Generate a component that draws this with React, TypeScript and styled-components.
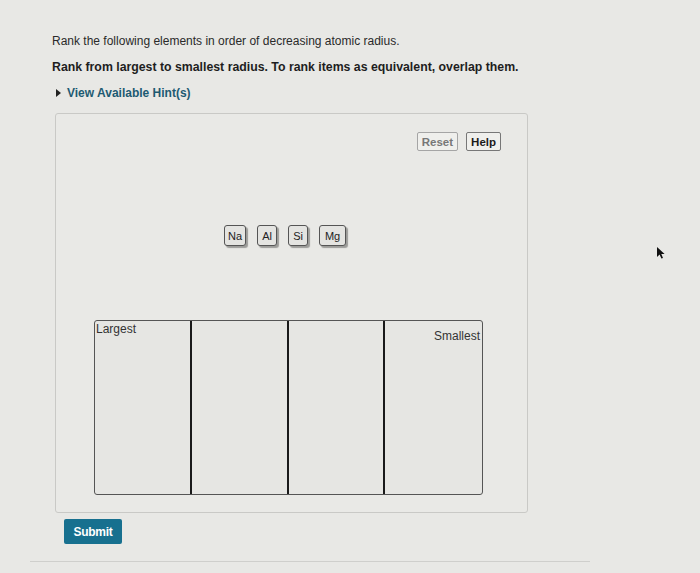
import React from "react";
import styled, { createGlobalStyle } from "styled-components";

const GlobalStyle = createGlobalStyle`
  html, body {
    margin: 0;
    padding: 0;
    background: #e8e8e5;
  }
  body {
    font-family: "Liberation Sans", Arial, sans-serif;
    color: #222;
  }
`;

const elements = ["Na", "Al", "Si", "Mg"];

const App = () => {
  return (
    <>
      <GlobalStyle />
      <Page>
        <Intro>Rank the following elements in order of decreasing atomic radius.</Intro>
        <Instruction>
          Rank from largest to smallest radius. To rank items as equivalent, overlap them.
        </Instruction>
        <HintToggle>
          <Caret />
          View Available Hint(s)
        </HintToggle>

        <Panel>
          <Toolbar>
            <ToolButton>Reset</ToolButton>
            <ToolButton $strong>Help</ToolButton>
          </Toolbar>

          <TileRow>
            {elements.map((el) => (
              <Tile key={el} $wide={el === "Mg"}>
                {el}
              </Tile>
            ))}
          </TileRow>

          <RankBox>
            <Slot>
              <SlotLabel>Largest</SlotLabel>
            </Slot>
            <Slot />
            <Slot />
            <Slot $end>
              <SlotLabel $right>Smallest</SlotLabel>
            </Slot>
          </RankBox>
        </Panel>

        <SubmitButton>Submit</SubmitButton>
        <Rule />
      </Page>
      <Cursor viewBox="0 0 10 14">
        <path d="M1 1 L1 11 L3.6 8.6 L5.4 12.6 L7 11.9 L5.3 8 L8.6 8 Z" fill="#111" />
      </Cursor>
    </>
  );
};

const Page = styled.div`
  padding: 34px 0 0 52px;
  width: 476px;
`;

const Intro = styled.p`
  margin: 0 0 12px;
  font-size: 12px;
  color: #2a2a2a;
`;

const Instruction = styled.p`
  margin: 0 0 12px;
  font-size: 12.3px;
  font-weight: 700;
  color: #1e1e1e;
`;

const HintToggle = styled.div`
  display: flex;
  align-items: center;
  gap: 6px;
  margin-left: 4px;
  font-size: 12px;
  font-weight: 700;
  color: #1d5a72;
`;

const Caret = styled.span`
  width: 0;
  height: 0;
  border-top: 4px solid transparent;
  border-bottom: 4px solid transparent;
  border-left: 5px solid #222;
`;

const Panel = styled.div`
  margin: 13px 0 0 3px;
  height: 400px;
  box-sizing: border-box;
  border: 1px solid #c9c9c6;
  border-radius: 3px;
  background: #e9e9e6;
  padding: 18px 26px 0 38px;
  display: flex;
  flex-direction: column;
`;

const Toolbar = styled.div`
  display: flex;
  justify-content: flex-end;
  gap: 8px;
`;

const ToolButton = styled.button<{ $strong?: boolean }>`
  height: 19px;
  padding: 0 4px;
  border: 1px solid ${(p) => (p.$strong ? "#777" : "#a5a5a5")};
  border-radius: 2px;
  background: #efefec;
  font-family: "Liberation Sans", Arial, sans-serif;
  font-size: 11.5px;
  font-weight: 700;
  color: ${(p) => (p.$strong ? "#1a1a1a" : "#777")};
`;

const TileRow = styled.div`
  display: flex;
  gap: 11px;
  margin: 74px 0 0 130px;
`;

const Tile = styled.div<{ $wide?: boolean }>`
  height: 21px;
  min-width: ${(p) => (p.$wide ? "27px" : "20px")};
  padding: 0 3px;
  box-sizing: border-box;
  display: flex;
  align-items: center;
  justify-content: center;
  border: 1px solid #555;
  border-radius: 3px;
  background: #e4e4e1;
  box-shadow: 2px 2px 1px #9c9c99;
  font-size: 11px;
  color: #222;
`;

const RankBox = styled.div`
  margin-top: 74px;
  height: 175px;
  width: 389px;
  box-sizing: border-box;
  border: 1.5px solid #555;
  border-radius: 3px;
  display: grid;
  grid-template-columns: repeat(4, 1fr);
  background: #e6e6e3;
`;

const Slot = styled.div<{ $end?: boolean }>`
  position: relative;
  border-right: ${(p) => (p.$end ? "none" : "2px solid #1a1a1a")};
`;

const SlotLabel = styled.span<{ $right?: boolean }>`
  position: absolute;
  top: 1px;
  ${(p) => (p.$right ? "right: 2px; top: 8px;" : "left: 1px;")}
  font-size: 12px;
  color: #333;
`;

const SubmitButton = styled.button`
  margin: 6px 0 0 12px;
  width: 58px;
  height: 25px;
  border: none;
  border-radius: 2px;
  background: #17708f;
  color: #fff;
  font-family: "Liberation Sans", Arial, sans-serif;
  font-size: 12px;
  font-weight: 700;
  letter-spacing: -0.3px;
`;

const Rule = styled.div`
  margin: 17px 0 0 -22px;
  width: 560px;
  border-top: 1px solid #cfcfcc;
`;

const Cursor = styled.svg`
  position: absolute;
  left: 656px;
  top: 246px;
  width: 10px;
  height: 14px;
`;

export default App;
